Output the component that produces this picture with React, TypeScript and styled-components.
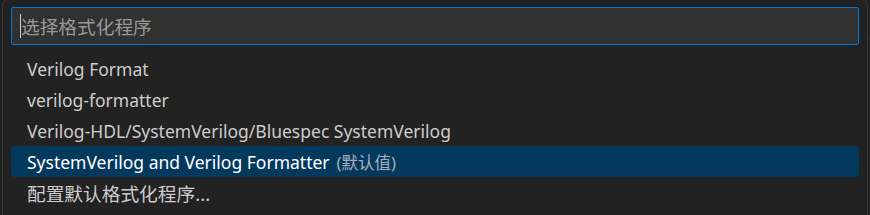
import styled, { createGlobalStyle } from "styled-components"

const GlobalStyle = createGlobalStyle`
  html, body {
    margin: 0;
    padding: 0;
    background: #1f1f1f;
    overflow: hidden;
  }
  body {
    font-family: "Noto Sans", "Noto Sans CJK SC", sans-serif;
  }
`

type Option = {
  label: string
  hint?: string
  selected?: boolean
  cjk?: boolean
}

const options: Option[] = [
  { label: "Verilog Format" },
  { label: "verilog-formatter" },
  { label: "Verilog-HDL/SystemVerilog/Bluespec SystemVerilog" },
  { label: "SystemVerilog and Verilog Formatter", hint: "(默认值)", selected: true },
  { label: "配置默认格式化程序...", cjk: true },
]

export default function App() {
  return (
    <Stage>
      <GlobalStyle />
      <Panel>
        <InputBox>
          <Caret />
          <Placeholder>选择格式化程序</Placeholder>
        </InputBox>
        <List>
          {options.map((option) => (
            <Row key={option.label} $selected={!!option.selected}>
              <Label $cjk={!!option.cjk}>{option.label}</Label>
              {option.hint && <Hint>{option.hint}</Hint>}
            </Row>
          ))}
        </List>
      </Panel>
      <Backdrop />
    </Stage>
  )
}

const Stage = styled.div`
  display: flex;
  width: 870px;
  height: 215px;
  padding-left: 2px;
  box-sizing: border-box;
`

const Panel = styled.div`
  width: 866px;
  height: 222px;
  flex-shrink: 0;
  box-sizing: border-box;
  background: #222222;
  border: 1px solid #383838;
  border-radius: 6px;
  padding: 7px 8px 0 8px;
  display: flex;
  flex-direction: column;
  gap: 8px;
  margin-top: -1px;
`

const Backdrop = styled.div`
  flex: 1;
  margin-top: 38px;
  height: 1px;
  background: #2b2b2b;
`

const InputBox = styled.div`
  height: 38px;
  box-sizing: border-box;
  background: #313131;
  border: 1px solid #0078d4;
  border-radius: 2px;
  display: flex;
  align-items: center;
  padding-left: 8px;
`

const Caret = styled.span`
  width: 1px;
  height: 24px;
  background: #cccccc;
`

const Placeholder = styled.span`
  color: #989898;
  font-size: 18.7px;
  line-height: 24px;
  margin-top: 2px;
`

const List = styled.div`
  display: flex;
  flex-direction: column;
`

const Row = styled.div<{ $selected: boolean }>`
  height: 31px;
  display: flex;
  align-items: center;
  gap: 7px;
  padding-left: 16px;
  border-radius: 4px;
  background: ${({ $selected }) => ($selected ? "#04395e" : "transparent")};
  color: ${({ $selected }) => ($selected ? "#ffffff" : "#cccccc")};
`

const Label = styled.span<{ $cjk: boolean }>`
  font-size: ${({ $cjk }) => ($cjk ? "18.7px" : "17.5px")};
  white-space: nowrap;
`

const Hint = styled.span`
  font-size: 16.5px;
  color: #a4afba;
`
